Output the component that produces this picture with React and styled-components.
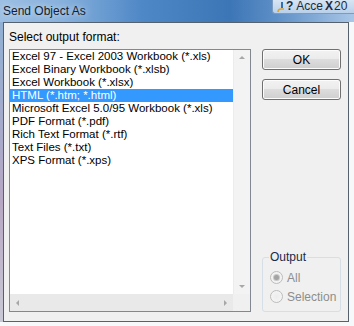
import React from "react";
import styled, { createGlobalStyle } from "styled-components";

const GlobalStyle = createGlobalStyle`
  html, body {
    margin: 0;
    padding: 0;
    background: #eef1f5;
  }
  body {
    font-family: "Liberation Sans", Arial, sans-serif;
    font-size: 11px;
  }
`;

const formats = [
  "Excel 97 - Excel 2003 Workbook (*.xls)",
  "Excel Binary Workbook (*.xlsb)",
  "Excel Workbook (*.xlsx)",
  "HTML (*.htm; *.html)",
  "Microsoft Excel 5.0/95 Workbook (*.xls)",
  "PDF Format (*.pdf)",
  "Rich Text Format (*.rtf)",
  "Text Files (*.txt)",
  "XPS Format (*.xps)",
];

const Screen = styled.div`
  width: 354px;
  height: 326px;
  overflow: hidden;
  display: flex;
  flex-direction: column;
  background: #f4f5f7;
`;

const TitleBar = styled.div`
  height: 22px;
  flex: none;
  display: flex;
  align-items: flex-start;
  background: linear-gradient(
    90deg,
    #9dbfe3 0%,
    #86b0dc 18%,
    #4f88c6 40%,
    #3d76b6 65%,
    #5d8fc7 78%,
    #a9c6e6 100%
  );
`;

const Title = styled.div`
  padding: 4px 0 0 3px;
  color: #15202e;
  font-size: 12px;
  line-height: 14px;
  text-shadow: 0 0 6px rgba(255, 255, 255, 0.8);
`;

const BehindWindow = styled.div`
  margin-left: auto;
  width: 82px;
  height: 14px;
  box-sizing: border-box;
  padding-left: 4px;
  display: flex;
  align-items: center;
  border: 1px solid #7b9cc1;
  border-top: none;
  border-right: none;
  border-radius: 0 0 0 3px;
  background: linear-gradient(180deg, #d7e5f4, #b9d0ea);
  font-size: 12px;
  line-height: 13px;
  color: #1d2b3c;
  white-space: nowrap;
`;

const Help = styled.span`
  font-weight: bold;
  margin-right: 3px;
`;

const Close = styled.span`
  font-weight: bold;
  margin: 0 1px 0 2px;
`;

const Body = styled.div`
  flex: 1;
  display: flex;
`;

const LeftEdge = styled.div`
  width: 3px;
  background: linear-gradient(180deg, #8fb0d4, #b7a7c4 60%, #c9c9d6);
`;

const Panel = styled.div`
  width: 339px;
  height: 282px;
  border: 1px solid #56616e;
  background: #f0f0f0;
  display: grid;
  grid-template-columns: 242px 79px;
  column-gap: 11px;
  padding: 7px 0 9px 5px;
`;

const LeftCol = styled.div`
  display: flex;
  flex-direction: column;
`;

const Label = styled.div`
  color: #000;
  font-size: 12px;
  line-height: 15px;
  height: 15px;
  margin-bottom: 4px;
`;

const ListBox = styled.div`
  width: 242px;
  height: 263px;
  box-sizing: border-box;
  border: 1px solid #828790;
  background: #fff;
  display: grid;
  grid-template-columns: 1fr 17px;
  grid-template-rows: 1fr 17px;
`;

const Items = styled.div`
  display: flex;
  flex-direction: column;
`;

const Item = styled.div`
  height: 13px;
  line-height: 13px;
  font-size: 11.5px;
  padding-left: 2px;
  white-space: nowrap;
  color: ${(p) => (p.$selected ? "#fff" : "#000")};
  background: ${(p) => (p.$selected ? "#3399ff" : "transparent")};
`;

const VScroll = styled.div`
  background: #f3f3f3;
  border-left: 1px solid #ececec;
  display: flex;
  flex-direction: column;
  justify-content: space-between;
  align-items: center;
  padding: 6px 0;
`;

const HScroll = styled.div`
  background: #e9e9e9;
  display: flex;
  justify-content: space-between;
  align-items: center;
  padding: 0 6px;
`;

const Corner = styled.div`
  background: #f0f0f0;
`;

const Arrow = styled.div`
  width: 0;
  height: 0;
  border-style: solid;
  border-color: transparent;
  ${(p) =>
    p.$dir === "up" &&
    "border-width: 0 3px 3px 3px; border-bottom-color: #a7a7a7;"}
  ${(p) =>
    p.$dir === "down" &&
    "border-width: 3px 3px 0 3px; border-top-color: #a7a7a7;"}
  ${(p) =>
    p.$dir === "left" &&
    "border-width: 3px 3px 3px 0; border-right-color: #a7a7a7;"}
  ${(p) =>
    p.$dir === "right" &&
    "border-width: 3px 0 3px 3px; border-left-color: #a7a7a7;"}
`;

const RightCol = styled.div`
  display: flex;
  flex-direction: column;
  padding-top: 19px;
`;

const Button = styled.button`
  width: 79px;
  height: 21px;
  margin: 0 0 9px 0;
  padding: 0;
  border: 1px solid #707070;
  border-radius: 3px;
  background: linear-gradient(180deg, #f2f2f2 0%, #ebebeb 49%, #dddddd 50%, #cfcfcf 100%);
  box-shadow: inset 0 0 0 1px #fcfcfc;
  font-family: "Liberation Sans", Arial, sans-serif;
  font-size: 12px;
  line-height: 18px;
  color: #000;
`;

const Group = styled.fieldset`
  margin: auto 0 0 0;
  padding: 7px 0 0 7px;
  height: 61px;
  box-sizing: border-box;
  border: 1px solid #d5dfe5;
  border-radius: 3px;
  display: flex;
  flex-direction: column;
  gap: 4px;
`;

const Legend = styled.legend`
  padding: 0 1px;
  margin-left: -1px;
  color: #18294a;
  font-size: 12px;
  line-height: 12px;
`;

const RadioRow = styled.div`
  display: flex;
  align-items: center;
  gap: 4px;
  height: 15px;
  font-size: 12px;
  color: #8d8d8d;
`;

const Radio = styled.span`
  width: 11px;
  height: 11px;
  border-radius: 50%;
  border: 1px solid #bcbcbc;
  background: radial-gradient(circle, #ececec 0%, #f7f7f7 100%);
  display: flex;
  align-items: center;
  justify-content: center;
  flex: none;
  &::after {
    content: "";
    width: 5px;
    height: 5px;
    border-radius: 50%;
    background: ${(p) => (p.$checked ? "#a3a3a3" : "transparent")};
    box-shadow: ${(p) => (p.$checked ? "0 0 0 1px #c8c8c8" : "none")};
  }
`;

const RightEdge = styled.div`
  flex: 1;
  background: #f7f8fa;
`;

const BottomEdge = styled.div`
  height: 4px;
  background: #f7f8fa;
`;

const App = () => {
  const [selected, setSelected] = React.useState(3);

  return (
    <>
      <GlobalStyle />
      <Screen>
        <TitleBar>
          <Title>Send Object As</Title>
          <BehindWindow>
            <svg width="9" height="12" viewBox="0 0 9 12">
              <path d="M1 11 a3 3 0 0 1 3 -3 h3" stroke="#e2a526" strokeWidth="1.6" fill="none" />
              <path d="M5 1 v6" stroke="#2f6fb8" strokeWidth="2" />
            </svg>
            <Help>?</Help>
            <span>Acce</span>
            <Close>X</Close>
            <span>20</span>
          </BehindWindow>
        </TitleBar>
        <Body>
          <LeftEdge />
          <Panel>
            <LeftCol>
              <Label>Select output format:</Label>
              <ListBox>
                <Items>
                  {formats.map((f, i) => (
                    <Item
                      key={f}
                      $selected={i === selected}
                      onClick={() => setSelected(i)}
                    >
                      {f}
                    </Item>
                  ))}
                </Items>
                <VScroll>
                  <Arrow $dir="up" />
                  <Arrow $dir="down" />
                </VScroll>
                <HScroll>
                  <Arrow $dir="left" />
                  <Arrow $dir="right" />
                </HScroll>
                <Corner />
              </ListBox>
            </LeftCol>
            <RightCol>
              <Button>OK</Button>
              <Button>Cancel</Button>
              <Group>
                <Legend>Output</Legend>
                <RadioRow>
                  <Radio $checked />
                  All
                </RadioRow>
                <RadioRow>
                  <Radio />
                  Selection
                </RadioRow>
              </Group>
            </RightCol>
          </Panel>
          <RightEdge />
        </Body>
        <BottomEdge />
      </Screen>
    </>
  );
};

export default App;
